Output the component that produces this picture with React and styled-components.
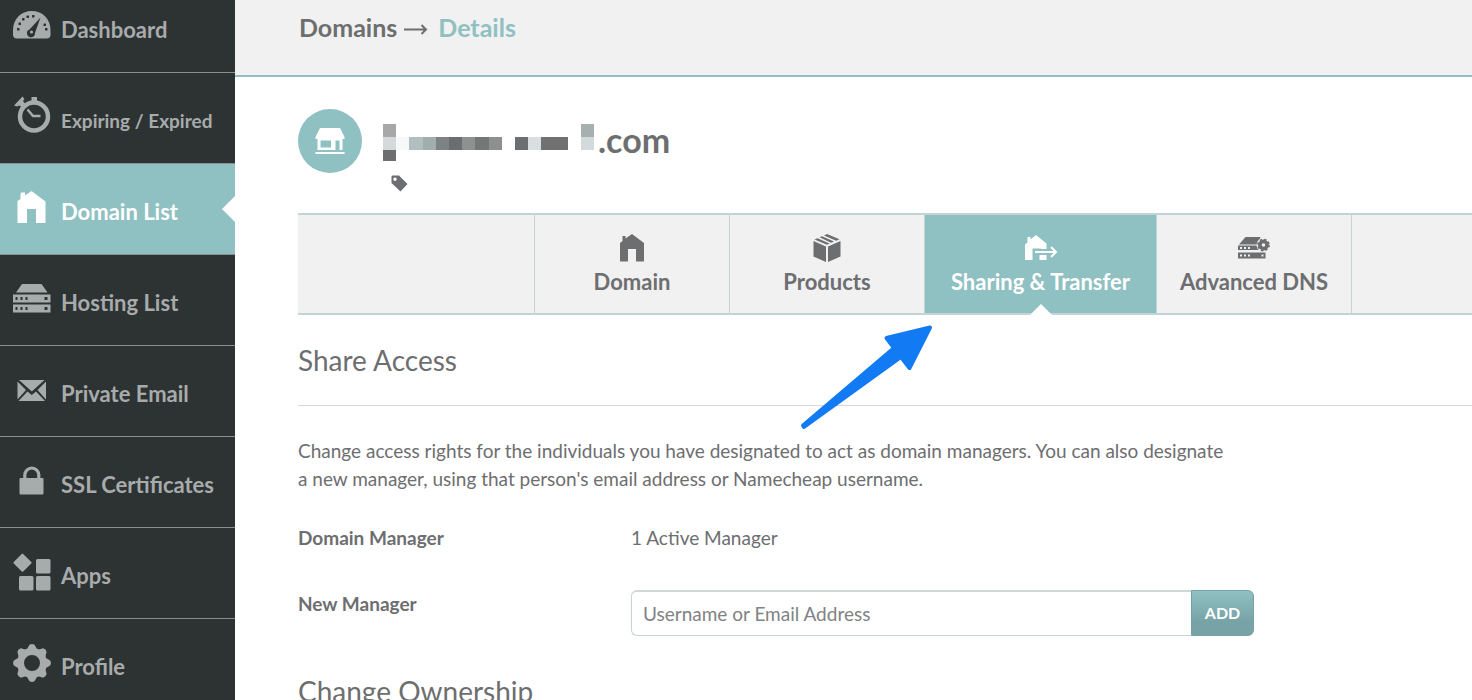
import React from "react";
import styled, { createGlobalStyle, css } from "styled-components";

const color = {
  dark: "#2d3233",
  teal: "#8fc0c2",
  muted: "#a8abab",
  text: "#6d6e70",
  panel: "#f1f1f1",
  line: "#c3d4d5",
};

const GlobalStyle = createGlobalStyle`
  *, *::before, *::after { box-sizing: border-box; }
  body {
    margin: 0;
    background: #fff;
    color: ${color.text};
    font-family: Lato, "Open Sans", sans-serif;
    font-size: 19px;
  }
  h1, h2, p, ul { margin: 0; padding: 0; }
  ul { list-style: none; }
`;

const Shell = styled.div`
  display: flex;
  height: 100vh;
  overflow: hidden;
`;

const Sidebar = styled.nav`
  flex: 0 0 235px;
  overflow: hidden;
  background: ${color.dark};
`;

const SideItem = styled.li`
  position: relative;
  height: 91px;
  border-bottom: 1px solid #8b8e8e;
  background: ${(p) => (p.$active ? color.teal : color.dark)};

  &:first-child {
    height: 73px;
  }

  ${(p) =>
    p.$active &&
    css`
      &::after {
        content: "";
        position: absolute;
        right: 0;
        top: 50%;
        margin-top: -13px;
        border: 13px solid transparent;
        border-left-width: 0;
        border-right-color: #fff;
      }
    `}
`;

const SideLink = styled.a`
  display: flex;
  align-items: flex-end;
  gap: 10px;
  height: 100%;
  padding: 0 0 27px 13px;
  color: ${(p) => (p.$active ? "#fff" : color.muted)};
  font-size: ${(p) => (p.$compact ? 19 : 22)}px;
  font-weight: 700;
  line-height: 30px;
  text-decoration: none;
  white-space: nowrap;

  svg {
    flex: none;
    width: 38px;
    height: 38px;
    fill: currentColor;
  }
`;

const Main = styled.main`
  flex: 1;
  min-width: 0;
  overflow-x: hidden;
  overflow-y: auto;
  scrollbar-width: none;
`;

const TopBar = styled.header`
  display: flex;
  align-items: flex-start;
  gap: 7px;
  height: 77px;
  padding: 11px 0 0 64px;
  background: ${color.panel};
  border-bottom: 2px solid ${color.teal};
  font-size: 25px;
  font-weight: 700;
  line-height: 32px;

  svg {
    width: 24px;
    height: 34px;
    margin-right: 3px;
  }
`;

const Crumb = styled.a`
  color: ${(p) => (p.$current ? color.teal : color.text)};
  text-decoration: none;
`;

const Content = styled.div`
  padding: 32px 0 32px 63px;
`;

const DomainHead = styled.section`
  display: flex;
  gap: 21px;
  margin-bottom: 21px;
`;

const DomainBadge = styled.div`
  display: grid;
  place-items: center;
  width: 64px;
  height: 64px;
  border-radius: 50%;
  background: ${color.teal};

  svg {
    width: 30px;
    height: 28px;
    fill: #fff;
  }
`;

const DomainInfo = styled.div`
  display: flex;
  flex-direction: column;
  align-items: flex-start;
  gap: 14px;
  padding-top: 14px;
`;

const DomainName = styled.h1`
  display: flex;
  gap: 3px;
  font-size: 34px;
  font-weight: 700;
  line-height: 34px;

  svg {
    width: 212px;
    height: 38px;
  }
`;

const TagButton = styled.button`
  display: block;
  margin-left: 8px;
  padding: 0;
  border: 0;
  background: none;
  color: ${color.text};

  svg {
    display: block;
    width: 17px;
    height: 17px;
    fill: currentColor;
  }
`;

const TabBar = styled.ul`
  display: flex;
  height: 102px;
  padding-left: 236px;
  background: ${color.panel};
  border: solid ${color.line};
  border-width: 2px 0;
`;

const TabItem = styled.li`
  position: relative;
  flex: 0 0 ${(p) => (p.$wide ? 232 : 195)}px;
  border-left: 1px solid ${color.line};

  &:last-child {
    flex-basis: 196px;
    border-right: 1px solid ${color.line};
  }

  ${(p) =>
    p.$active &&
    css`
      &::after {
        content: "";
        position: absolute;
        left: 50%;
        bottom: -2px;
        margin-left: -11px;
        border: 11px solid transparent;
        border-top-width: 0;
        border-bottom-color: #fff;
      }
    `}
`;

const Tab = styled.button`
  display: flex;
  flex-direction: column;
  align-items: center;
  gap: 5px;
  width: 100%;
  height: 100%;
  padding: 18px 0 0;
  border: 0;
  background: ${(p) => (p.$active ? color.teal : "transparent")};
  color: ${(p) => (p.$active ? "#fff" : color.text)};
  font: inherit;
  font-size: 22px;
  font-weight: 700;
  line-height: 28px;
  white-space: nowrap;

  svg {
    width: 34px;
    height: 30px;
    fill: currentColor;
  }
`;

const Pointer = styled.svg`
  position: absolute;
  z-index: 1;
  top: 105px;
  left: -127px;
  width: 136px;
  height: 110px;
  fill: #127bf3;
  stroke: #127bf3;
  stroke-width: 4px;
  stroke-linejoin: round;
  pointer-events: none;
`;

const SectionTitle = styled.h2`
  padding: 26px 0;
  font-size: 28px;
  font-weight: 400;
  line-height: 38px;
  border-bottom: 1px solid #d5d6d6;
`;

const Intro = styled.p`
  max-width: 956px;
  padding: 31px 0;
  line-height: 28px;
`;

const FieldRow = styled.div`
  display: grid;
  grid-template-columns: 333px minmax(0, 623px);
  align-items: start;
  margin-bottom: 38px;
  line-height: 28px;

  &:last-child {
    margin-bottom: 10px;
  }
`;

const FieldLabel = styled.label`
  font-weight: 700;
`;

const AddForm = styled.form`
  display: flex;
  height: 46px;
`;

const ManagerInput = styled.input`
  flex: 1;
  min-width: 0;
  padding: 0 11px;
  border: 1px solid #c5d3d3;
  border-top: 2px solid #cdd8d7;
  border-right: 0;
  border-radius: 6px 0 0 6px;
  background: #fff;
  color: ${color.text};
  font: inherit;

  &::placeholder {
    color: #808384;
    opacity: 1;
  }
`;

const AddButton = styled.button`
  width: 63px;
  padding: 0;
  border: 1px solid #76a2a5;
  border-radius: 0 6px 6px 0;
  background: linear-gradient(#8fc0c2, #78a3a6 70%);
  color: #fff;
  font: inherit;
  font-size: 16px;
  font-weight: 700;
`;

const dots = [[5, 22], [6.5, 16.5], [10, 12], [14.5, 9.5], [20, 9], [31.5, 17.5], [33, 22]];

const icons = {
  dashboard: (
    <>
      <path d="M0 23C0 12 8 4 18.800 4S37.500 12 37.500 23v4.500q0 4-4 4H4q-4 0-4-4z" />
      <g fill={color.dark}>
        {dots.map(([x, y]) => (
          <rect key={x} x={x - 1} y={y - 1} width="2.500" height="2.500" rx="0.500" />
        ))}
        <path d="M27.500 10.500 22 26a4 4 0 1 1-5.500-3.500z" />
      </g>
      <circle cx="18.500" cy="25" r="1.600" />
    </>
  ),
  clock: (
    <>
      <circle cx="21" cy="18.500" r="14" fill="none" stroke="currentColor" strokeWidth="4.500" />
      <path d="M18.500-1h5.500v5h-5.500zM1 7.500 9.500-1.500l2 2.500-1.500 2 2 2.500-3.500 3.500-2.500-1.500-2 1z" />
      <path d="m14.500 11.500 5.500 6.500h7.500" fill="none" stroke="currentColor" strokeWidth="2.500" />
    </>
  ),
  house: (
    <path d="M4.500 12 7.500 10V4.500l1-1h3.500V6.500L18.500 2l14 10.500V34H23V20h-9v14H4.500z" />
  ),
  server: (
    <>
      <path d="M9 4h19.500l6 8.500H3zM0 14.500h37.500v8H0zM0 24.500h37.500v8H0z" />
      <path
        fill={color.dark}
        d="M2.500 17h2v3h-2zM7.500 17h2v3h-2zM12.500 17h2v3h-2zM31.500 17h3v3h-3zM2.500 27h2v3h-2zM7.500 27h2v3h-2zM12.500 27h2v3h-2zM31.500 27h3v3h-3z"
      />
    </>
  ),
  mail: (
    <path d="M6 9h25.500L18.800 20.500zM4.500 10.500 13 19l-8.500 9.500zM33 10.500 24.500 19l8.500 9.500zM5.500 30l9-9.500 4.300 3.500 4.200-3.500 9 9.500z" />
  ),
  lock: (
    <>
      <rect x="6.500" y="16" width="24" height="16.500" rx="1" />
      <path d="M11.800 17v-4a7 7 0 0 1 14 0v4" fill="none" stroke="currentColor" strokeWidth="3.200" />
    </>
  ),
  apps: (
    <>
      <rect x="2.800" y="3" width="13.400" height="13.400" rx="1" transform="rotate(45 9.500 9.700)" />
      <rect x="23" y="6" width="14.500" height="14.500" rx="1.500" />
      <rect x="6" y="23" width="14.500" height="14.500" rx="1.500" />
      <rect x="23" y="23" width="14.500" height="14.500" rx="1.500" />
    </>
  ),
  gear: (
    <>
      <circle cx="19" cy="19" r="11.500" fill="none" stroke="currentColor" strokeWidth="7" />
      {[0, 45, 90, 135, 180, 225, 270, 315].map((a) => (
        <path key={a} d="M13.500 6 16.500.800Q19-.800 21.500.800L24.500 6z" transform={`rotate(${a} 19 19)`} />
      ))}
    </>
  ),
};

const navItems = [
  { name: "Dashboard", icon: "dashboard" },
  { name: "Expiring / Expired", icon: "clock", compact: true },
  { name: "Domain List", icon: "house", active: true },
  { name: "Hosting List", icon: "server" },
  { name: "Private Email", icon: "mail" },
  { name: "SSL Certificates", icon: "lock" },
  { name: "Apps", icon: "apps" },
  { name: "Profile", icon: "gear" },
];

const tabIcons = {
  house: <path d="M5 10l2.500-2V3h3v2.500L17 1l12 9v18.500h-8V16h-8v12.500H5z" />,
  box: (
    <path d="m3.500 8 12.500 5.500V29L3.500 23.500zM30.500 8 18 13.500V29l12.500-5.500zM4.500 6.500l3-1.300L19.500 10.500 17 11.800zM9.500 4.300l2.500-1L24 8.500l-3 1.200zM14 2.500 17 1l12.500 5.300-3.300 1.400z" />
  ),
  share: (
    <>
      <path d="M1 11.500 3.500 9.500V4h3v2.500L12 2l10.500 8.500V16h-4l-3-.5H8.500V27H1zM15.500 22h7v5h-7z" />
      <path d="M11 19h20M27 14l5 5-5 5" fill="none" stroke="currentColor" strokeWidth="2" />
    </>
  ),
  dns: (
    <>
      <path d="M8.500 4h15l-3 7.500H2zM1 12.500h19l5 4.500H1zM1 19.500h27.500v6H1z" />
      <path fill={color.panel} d="M3 14h2v2H3zM7 14h2v2H7zM11 14h2v2h-2zM3 21.500h2v2H3zM7 21.500h2v2H7zM11 21.500h2v2h-2zM24.500 21.500h2v2h-2z" />
      <circle cx="26.500" cy="12" r="7" fill={color.panel} />
      <circle cx="26.500" cy="12" r="3.600" fill="none" stroke="currentColor" strokeWidth="3.600" />
      <circle cx="26.500" cy="12" r="5.500" fill="none" stroke="currentColor" strokeWidth="1.800" strokeDasharray="2.320 2" />
    </>
  ),
};

const tabs = [
  { name: "Domain", icon: "house" },
  { name: "Products", icon: "box" },
  { name: "Sharing & Transfer", icon: "share", active: true },
  { name: "Advanced DNS", icon: "dns" },
];

const hiddenName = [
  [0, 1, "#a8a8a8"], [0, 14, "#d4d9da"], [0, 27, "#6d6e70"],
  [1, 14, "#f7f8f8"], [2, 14, "#b0c0bf"], [3, 14, "#a0aeac"], [4, 14, "#7d8284"],
  [5, 14, "#6b6d6f"], [6, 14, "#8f9191"], [7, 14, "#747776"], [8, 14, "#8e908f"],
  [10, 14, "#6d6e70"], [11, 14, "#d9dfdf"], [12, 14, "#707170"], [13, 14, "#6f7271"],
  [15, 1, "#a6b0ae"], [15, 14, "#d3dadb"],
];

export default function App() {
  return (
    <>
      <GlobalStyle />
      <Shell>
        <Sidebar>
          <ul>
            {navItems.map(({ name, icon, active, compact }) => (
              <SideItem key={name} $active={active}>
                <SideLink href="#" $active={active} $compact={compact}>
                  <svg viewBox="0 0 38 38" overflow="visible" aria-hidden="true">{icons[icon]}</svg>
                  {name}
                </SideLink>
              </SideItem>
            ))}
          </ul>
        </Sidebar>
        <Main>
          <TopBar>
            <Crumb href="#">Domains</Crumb>
            <svg viewBox="0 0 24 34" fill="none" stroke={color.text} strokeWidth="2" aria-hidden="true">
              <path d="M0 18.500h21M17.500 14l4.500 4.500-4.500 4.500" />
            </svg>
            <Crumb href="#" $current>Details</Crumb>
          </TopBar>
          <Content>
            <DomainHead>
              <DomainBadge>
                <svg viewBox="0 0 30 28" aria-hidden="true">
                  <path d="M5 1h20l4.500 9v2h-29v-2zM2.500 12h25v11h-25zM.500 25h29v2H.500z" />
                  <path fill={color.teal} d="M5.500 13.500h10.500v7H5.500zM20.500 13.500h4v9.500h-4z" />
                </svg>
              </DomainBadge>
              <DomainInfo>
                <DomainName>
                  <svg viewBox="0 0 212 38" aria-hidden="true" shapeRendering="crispEdges">
                    {hiddenName.map(([col, y, fill]) => (
                      <rect key={`${col}-${y}`} x={col * 13.2} y={y} width="13.200" height={y === 27 ? 11 : 13} fill={fill} />
                    ))}
                  </svg>
                  .com
                </DomainName>
                <TagButton type="button" aria-label="Tags">
                  <svg viewBox="0 0 17 17">
                    <path fillRule="evenodd" d="M.500 1.500q0-1 1-1H8l8.500 8.500-7 7.500L.500 8zM4 2.500a1.700 1.700 0 1 0 0 3.400 1.700 1.700 0 0 0 0-3.400z" />
                  </svg>
                </TagButton>
              </DomainInfo>
            </DomainHead>

            <TabBar>
              {tabs.map(({ name, icon, active }) => (
                <TabItem key={name} $wide={active} $active={active}>
                  <Tab type="button" $active={active}>
                    <svg viewBox="0 0 34 30" aria-hidden="true">{tabIcons[icon]}</svg>
                    {name}
                  </Tab>
                  {active && (
                    <Pointer viewBox="0 0 136 110" aria-hidden="true">
                      <path d="M5 105.500 96 28 88.500 18 132 7.500 111.500 48 103 37 6 107z" />
                    </Pointer>
                  )}
                </TabItem>
              ))}
            </TabBar>

            <SectionTitle>Share Access</SectionTitle>
            <Intro>
              Change access rights for the individuals you have designated to act as domain managers. You can
              also designate a&nbsp;new manager, using that person's email address or Namecheap username.
            </Intro>
            <div>
              <FieldRow>
                <FieldLabel as="span">Domain Manager</FieldLabel>
                <span>1 Active Manager</span>
              </FieldRow>
              <FieldRow>
                <FieldLabel htmlFor="new-manager">New Manager</FieldLabel>
                <AddForm onSubmit={(e) => e.preventDefault()}>
                  <ManagerInput id="new-manager" type="text" placeholder="Username or Email Address" />
                  <AddButton type="submit">ADD</AddButton>
                </AddForm>
              </FieldRow>
            </div>

            <SectionTitle>Change Ownership</SectionTitle>
          </Content>
        </Main>
      </Shell>
    </>
  );
}
